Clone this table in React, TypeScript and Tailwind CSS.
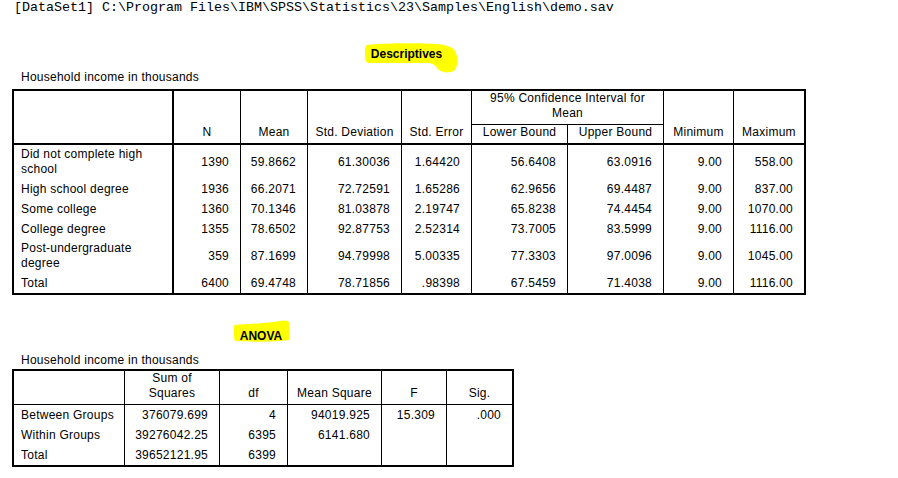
const sans = "font-['Liberation_Sans',Arial,sans-serif] text-[12px] tracking-[0.25px]";

type DataRow = {
  label: string;
  values: string[];
};

const descRows: DataRow[] = [
  { label: "Did not complete high school", values: ["1390", "59.8662", "61.30036", "1.64420", "56.6408", "63.0916", "9.00", "558.00"] },
  { label: "High school degree", values: ["1936", "66.2071", "72.72591", "1.65286", "62.9656", "69.4487", "9.00", "837.00"] },
  { label: "Some college", values: ["1360", "70.1346", "81.03878", "2.19747", "65.8238", "74.4454", "9.00", "1070.00"] },
  { label: "College degree", values: ["1355", "78.6502", "92.87753", "2.52314", "73.7005", "83.5999", "9.00", "1116.00"] },
  { label: "Post-undergraduate degree", values: ["359", "87.1699", "94.79998", "5.00335", "77.3303", "97.0096", "9.00", "1045.00"] },
  { label: "Total", values: ["6400", "69.4748", "78.71856", ".98398", "67.5459", "71.4038", "9.00", "1116.00"] },
];

const anovaRows: DataRow[] = [
  { label: "Between Groups", values: ["376079.699", "4", "94019.925", "15.309", ".000"] },
  { label: "Within Groups", values: ["39276042.25", "6395", "6141.680", "", ""] },
  { label: "Total", values: ["39652121.95", "6399", "", "", ""] },
];

function NumCell({ value, last }: { value: string; last: boolean }) {
  return (
    <div
      className={
        last
          ? "flex items-center justify-end pr-[11px]"
          : "flex items-center justify-end pr-[11px] border-r border-black"
      }
    >
      {value}
    </div>
  );
}

function Descriptives() {
  return (
    <section className="ml-[12px] mt-[29px] w-[794px]">
      <div className="flex justify-center pr-[5px] leading-[15px]">
        <span className="relative inline-block">
          <svg
            className="absolute left-[-6px] top-[-2px]"
            width="93"
            height="30"
            viewBox="0 0 93 30"
          >
            <path
              d="M2 2 C20 0 55 0 72 1 C82 2 89 4 91 10 C93 16 93 24 89 28 C85 30 78 30 74 27 C71 24 70 21 64 20 L5 20 C1 20 0 18 0 12 C0 6 0 3 2 2 Z"
              fill="#ffff00"
            />
          </svg>
          <span className="relative font-['Liberation_Sans',Arial,sans-serif] text-[12px] font-bold">
            Descriptives
          </span>
        </span>
      </div>
      <div className={`${sans} mt-[8px] pl-[9px] leading-[15px]`}>
        Household income in thousands
      </div>
      <div
        className={`${sans} mt-[4px] grid grid-cols-[160px_67px_67px_94px_70px_96px_96px_70px_70px] grid-rows-[34px_20px_34px_20px_20px_20px_34px_20px] border-2 border-black leading-[15px]`}
      >
        <div className="row-span-2 border-r-2 border-b-2 border-black" />
        <div className="row-span-2 flex items-end justify-center pb-[3px] border-r border-b-2 border-black">N</div>
        <div className="row-span-2 flex items-end justify-center pb-[3px] border-r border-b-2 border-black">Mean</div>
        <div className="row-span-2 flex items-end justify-center pb-[3px] border-r border-b-2 border-black">Std. Deviation</div>
        <div className="row-span-2 flex items-end justify-center pb-[3px] border-r border-b-2 border-black">Std. Error</div>
        <div className="col-span-2 flex items-start justify-center text-center border-r border-b border-black">
          <div>
            95% Confidence Interval for
            <br />
            Mean
          </div>
        </div>
        <div className="row-span-2 flex items-end justify-center pb-[3px] border-r border-b-2 border-black">Minimum</div>
        <div className="row-span-2 flex items-end justify-center pb-[3px] border-b-2 border-black">Maximum</div>
        <div className="flex items-start justify-center border-r border-b-2 border-black">Lower Bound</div>
        <div className="flex items-start justify-center border-r border-b-2 border-black">Upper Bound</div>

        {descRows.map((row) => (
          <div key={row.label} className="contents">
            <div className="flex items-center pl-[7px] pr-[20px] border-r-2 border-black">
              {row.label}
            </div>
            {row.values.map((v, i) => (
              <NumCell key={i} value={v} last={i === row.values.length - 1} />
            ))}
          </div>
        ))}
      </div>
    </section>
  );
}

function Anova() {
  return (
    <section className="ml-[12px] mt-[32px] w-[502px]">
      <div className="flex justify-center pr-[4px] leading-[15px]">
        <span className="relative inline-block">
          <svg
            className="absolute left-[-6px] top-[-7px]"
            width="56"
            height="22"
            viewBox="0 0 56 22"
          >
            <path
              d="M1 5 C15 4 35 3 46 1 C51 0 55 0 55 3 L55 20 C40 22 15 22 2 21 C0 21 0 18 0 14 L0 7 C0 6 0 5 1 5 Z"
              fill="#ffff00"
            />
          </svg>
          <span className="relative font-['Liberation_Sans',Arial,sans-serif] text-[12px] font-bold">
            ANOVA
          </span>
        </span>
      </div>
      <div className={`${sans} mt-[9px] pl-[9px] leading-[15px]`}>
        Household income in thousands
      </div>
      <div
        className={`${sans} mt-[1px] grid grid-cols-[111px_95px_68px_94px_65px_65px] grid-rows-[34px_20px_20px_20px] border-2 border-black leading-[15px]`}
      >
        <div className="border-r border-b border-black" />
        <div className="flex items-end justify-center pb-[3px] text-center border-r border-b border-black">
          <div>
            Sum of
            <br />
            Squares
          </div>
        </div>
        <div className="flex items-end justify-center pb-[3px] border-r border-b border-black">df</div>
        <div className="flex items-end justify-center pb-[3px] border-r border-b border-black">Mean Square</div>
        <div className="flex items-end justify-center pb-[3px] border-r border-b border-black">F</div>
        <div className="flex items-end justify-center pb-[3px] border-b border-black">Sig.</div>

        {anovaRows.map((row) => (
          <div key={row.label} className="contents">
            <div className="flex items-center pl-[7px] border-r border-black">{row.label}</div>
            {row.values.map((v, i) => (
              <NumCell key={i} value={v} last={i === row.values.length - 1} />
            ))}
          </div>
        ))}
      </div>
    </section>
  );
}

export default function App() {
  return (
    <div className="h-[478px] w-[898px] overflow-hidden bg-white text-black">
      <div className="pl-[14px] font-['Liberation_Mono','Courier_New',monospace] text-[13.33px] leading-[16px] whitespace-pre">
        [DataSet1] C:\Program Files\IBM\SPSS\Statistics\23\Samples\English\demo.sav
      </div>
      <Descriptives />
      <Anova />
    </div>
  );
}
